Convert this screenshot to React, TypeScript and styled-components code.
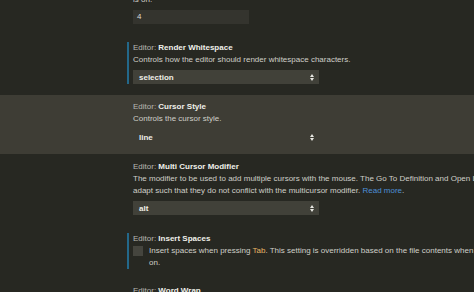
import * as React from 'react'
import styled, { createGlobalStyle } from 'styled-components'

const GlobalStyle = createGlobalStyle`
  html, body {
    margin: 0;
    padding: 0;
    background: #272822;
    overflow: hidden;
  }
  body {
    width: 474px;
    height: 292px;
    font-family: 'Liberation Sans', Arial, sans-serif;
    font-size: 8px;
    color: #c9c9c2;
  }
`

const Page = styled.div`
  display: flex;
  flex-direction: column;
  margin-top: -6px;
  width: 474px;
`

const Row = styled.div<{ $active?: boolean; $pt?: number; $pb?: number }>`
  padding: ${p => p.$pt ?? 6}px 0 ${p => p.$pb ?? 10}px;
  background: ${p => (p.$active ? '#3e3d35' : 'transparent')};
`

const Body = styled.div<{ $focused?: boolean }>`
  margin-left: 127px;
  padding-left: 4px;
  border-left: 2px solid ${p => (p.$focused ? '#23688a' : 'transparent')};
  width: 520px;
`

const Title = styled.div`
  line-height: 12px;
  color: #b8b8b2;
  white-space: nowrap;
  b {
    color: #f0f0ea;
    font-weight: bold;
  }
`

const Desc = styled.div`
  line-height: 12px;
  color: #cfcfc8;
  white-space: nowrap;
`

const Link = styled.span`
  color: #4d8fd6;
`

const Code = styled.span`
  color: #e8b665;
`

const TextInput = styled.div`
  margin-top: 4px;
  width: 112px;
  height: 14px;
  padding-left: 4px;
  line-height: 14px;
  background: #34342e;
  color: #dcdcd6;
`

const Select = styled.div<{ $bg?: string }>`
  margin-top: ${p => (p.$bg ? 5 : 4)}px;
  display: flex;
  align-items: center;
  justify-content: space-between;
  width: 186px;
  height: 14px;
  padding: 0 5px 0 6px;
  box-sizing: border-box;
  background: ${p => p.$bg ?? '#414139'};
  color: #eeeee8;
  font-weight: bold;
`

const Arrows = () => (
  <svg width="4" height="7" viewBox="0 0 4 7">
    <path d="M0 3 L2 0 L4 3 Z M0 4 L2 7 L4 4 Z" fill="#e8e8e2" />
  </svg>
)

const CheckRow = styled.div`
  display: flex;
  gap: 6px;
`

const Checkbox = styled.div`
  flex: none;
  width: 10px;
  height: 10px;
  margin-top: 1px;
  background: #45453e;
`

const Select2 = ({ value, bg }: { value: string; bg?: string }) => (
  <Select $bg={bg}>
    <span>{value}</span>
    <Arrows />
  </Select>
)

export default function App() {
  return (
    <Page>
      <GlobalStyle />
      <Row $pt={0} $pb={16}>
        <Body>
          <Desc>is on.</Desc>
          <TextInput>4</TextInput>
        </Body>
      </Row>
      <Row $pt={2} $pb={11}>
        <Body $focused>
          <Title>
            Editor: <b>Render Whitespace</b>
          </Title>
          <Desc>Controls how the editor should render whitespace characters.</Desc>
          <Select2 value="selection" />
        </Body>
      </Row>
      <Row $active>
        <Body>
          <Title>
            Editor: <b>Cursor Style</b>
          </Title>
          <Desc>Controls the cursor style.</Desc>
          <Select2 value="line" bg="#3e3d35" />
        </Body>
      </Row>
      <Row $pt={7} $pb={12}>
        <Body>
          <Title>
            Editor: <b>Multi Cursor Modifier</b>
          </Title>
          <Desc>
            The modifier to be used to add multiple cursors with the mouse. The Go To Definition and Open Link
            mouse gestures will
          </Desc>
          <Desc>
            adapt such that they do not conflict with the multicursor modifier. <Link>Read more</Link>.
          </Desc>
          <Select2 value="alt" />
        </Body>
      </Row>
      <Row $pb={10}>
        <Body $focused>
          <Title>
            Editor: <b>Insert Spaces</b>
          </Title>
          <CheckRow>
            <Checkbox />
            <div>
              <Desc>
                Insert spaces when pressing <Code>Tab</Code>. This setting is overridden based on the file contents
                when
              </Desc>
              <Desc>on.</Desc>
            </div>
          </CheckRow>
        </Body>
      </Row>
      <Row>
        <Body>
          <Title>
            Editor: <b>Word Wrap</b>
          </Title>
        </Body>
      </Row>
    </Page>
  )
}
